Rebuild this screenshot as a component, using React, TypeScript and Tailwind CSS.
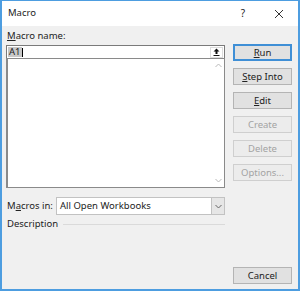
import React from "react";

const font = { fontFamily: '"Noto Sans", "Open Sans", sans-serif' };

function Btn({ children, disabled, primary }: { children: React.ReactNode; disabled?: boolean; primary?: boolean }) {
  const base = "h-[17px] w-full flex items-center justify-center text-[9.5px] leading-none";
  if (primary) {
    return <div className={`${base} bg-[#e1e1e1] border-2 border-[#3f8fd6] text-[#222]`}>{children}</div>;
  }
  if (disabled) {
    return <div className={`${base} bg-[#ececec] border border-[#cfcfcf] text-[#a3a3a3]`}>{children}</div>;
  }
  return <div className={`${base} bg-[#e1e1e1] border border-[#b4b4b4] text-[#222]`}>{children}</div>;
}

function Chevron({ down }: { down?: boolean }) {
  return (
    <svg width="7" height="5" viewBox="0 0 7 5">
      <path d={down ? "M0.5 1 L3.5 4 L6.5 1" : "M0.5 4 L3.5 1 L6.5 4"} fill="none" stroke="#b9b9b9" strokeWidth="1" />
    </svg>
  );
}

export default function App() {
  return (
    <div className="w-[300px] h-[293px] bg-white" style={font}>
      <div className="w-[300px] h-[291px] border-2 border-t border-[#4d9de0] flex flex-col">
        {/* Title bar */}
        <div className="h-[25px] bg-white flex items-center pl-[6px] pr-[14px] text-[#222]">
          <span className="text-[9.5px] flex-1">Macro</span>
          <span className="text-[10px] mr-[29px]">?</span>
          <svg width="10" height="10" viewBox="0 0 10 10">
            <path d="M1 1 L9 9 M9 1 L1 9" stroke="#333" strokeWidth="1" />
          </svg>
        </div>

        {/* Body */}
        <div className="flex-1 bg-[#f0f0f0] flex pl-[4px] pr-[5px] pb-[5px] text-[#222]">
          {/* Left column */}
          <div className="w-[219px] flex flex-col">
            <div className="text-[9.5px] h-[19px] pt-[5px] pl-[1px] leading-none">
              <span className="underline">M</span>acro name:
            </div>
            <div className="h-[13px] bg-white border border-[#7a7a7a] border-b-0 flex items-center">
              <div className="flex-1 flex items-center pl-[1px] text-[9.5px] leading-none">
                <span className="bg-[#c8c8c8] px-[1px]">A1</span>
                <span className="w-px h-[9px] bg-black" />
              </div>
              <div className="w-[13px] h-[11px] mr-[1px] border border-[#dcdcdc] flex items-center justify-center">
                <svg width="7" height="8" viewBox="0 0 7 8">
                  <path d="M3.5 0.5 L6.5 3.5 L4.5 3.5 L4.5 6 L2.5 6 L2.5 3.5 L0.5 3.5 Z" fill="#111" />
                  <path d="M0.5 7.5 L6.5 7.5" stroke="#111" strokeWidth="1" />
                </svg>
              </div>
            </div>
            <div className="h-[130px] bg-white border border-[#8a8a8a] border-l-2 flex justify-end">
              <div className="w-[12px] flex flex-col items-center justify-between pt-[4px] pb-[4px]">
                <Chevron />
                <Chevron down />
              </div>
            </div>

            <div className="flex items-center mt-[9px] h-[18px]">
              <div className="w-[50px] text-[9.5px] pl-[1px] leading-none">
                M<span className="underline">a</span>cros in:
              </div>
              <div className="flex-1 h-[18px] bg-white border border-[#c2c2c2] flex items-center">
                <span className="flex-1 pl-[3px] text-[9.5px] leading-none">All Open Workbooks</span>
                <div className="w-[13px] h-full bg-[#e6e6e6] border-l border-[#c2c2c2] flex items-center justify-center">
                  <svg width="7" height="5" viewBox="0 0 7 5">
                    <path d="M0.5 1 L3.5 4 L6.5 1" fill="none" stroke="#666" strokeWidth="1" />
                  </svg>
                </div>
              </div>
            </div>

            <div className="flex items-center mt-[3px] h-[12px]">
              <span className="text-[9.5px] pl-[1px] leading-none">Description</span>
              <div className="flex-1 ml-[5px] h-px bg-[#dadada]" />
            </div>
          </div>

          {/* Right column */}
          <div className="w-[59px] ml-[8px] flex flex-col pt-[18px] gap-[7px]">
            <Btn primary>
              <span><span className="underline">R</span>un</span>
            </Btn>
            <Btn>
              <span><span className="underline">S</span>tep Into</span>
            </Btn>
            <Btn>
              <span><span className="underline">E</span>dit</span>
            </Btn>
            <Btn disabled>Create</Btn>
            <Btn disabled>Delete</Btn>
            <Btn disabled>Options...</Btn>
            <div className="mt-auto">
              <Btn>Cancel</Btn>
            </div>
          </div>
        </div>
      </div>
    </div>
  );
}
